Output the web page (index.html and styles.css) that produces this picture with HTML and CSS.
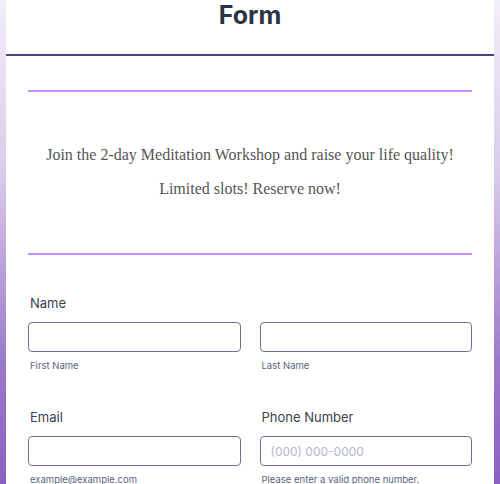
FILE: index.html
```html
<!DOCTYPE html>
<html>
<head>
<meta charset="utf-8">
<link rel="stylesheet" href="styles.css">
</head>
<body>
<div class="card">
  <div class="header"><h1 class="title">Form</h1></div>
  <div class="content">
    <hr class="divider">
    <div class="intro">
      <p>Join the 2-day Meditation Workshop and raise your life quality!</p>
      <p>Limited slots! Reserve now!</p>
    </div>
    <hr class="divider">
    <div class="field">
      <div class="label">Name</div>
      <div class="row">
        <div class="col"><div class="input"></div><div class="sub">First Name</div></div>
        <div class="col"><div class="input"></div><div class="sub">Last Name</div></div>
      </div>
    </div>
    <div class="row two">
      <div class="col">
        <div class="label">Email</div>
        <div class="input"></div>
        <div class="sub">example@example.com</div>
      </div>
      <div class="col">
        <div class="label">Phone Number</div>
        <div class="input"><span class="ph">(000) 000-0000</span></div>
        <div class="sub">Please enter a valid phone number.</div>
      </div>
    </div>
  </div>
</div>
</body>
</html>
```
FILE: styles.css
```css
html, body {
  margin: 0;
  height: 100%;
}
body {
  background: linear-gradient(to bottom, #f2eef8 0%, #d9cdeb 35%, #9c78cb 75%, #8a60c2 100%);
  font-family: Inter, "Noto Sans", sans-serif;
  overflow: hidden;
}
.card {
  margin: 0 6px;
  background: #fff;
  min-height: 100%;
}
.header {
  height: 54px;
  border-bottom: 2px solid #4a4580;
}
.title {
  margin: 0;
  text-align: center;
  font-size: 25px;
  line-height: 30px;
  font-weight: 700;
  color: #2c3345;
}
.content {
  padding: 34px 22px 0;
}
.divider {
  margin: 0;
  border: 0;
  height: 2px;
  background: #c78cf8;
}
.intro {
  padding: 53px 0 54px;
  text-align: center;
  font-family: "Liberation Serif", serif;
  font-size: 16px;
  color: #555;
  white-space: nowrap;
}
.intro p {
  margin: 0 0 14px;
  line-height: 20px;
}
.intro p:last-child {
  margin-bottom: 0;
}
.field {
  padding-top: 39px;
}
.label {
  font-size: 13px;
  line-height: 18px;
  color: #3a3f4b;
  padding-left: 2px;
  margin-bottom: 10px;
}
.row {
  display: grid;
  grid-template-columns: 1fr 1fr;
  column-gap: 19px;
}
.row.two {
  margin-top: 35px;
}
.input {
  height: 28px;
  border: 1.5px solid #6c739b;
  border-radius: 4px;
  display: flex;
  align-items: center;
  padding-left: 10px;
}
.ph {
  font-size: 12px;
  color: #b3b8ca;
}
.sub {
  font-size: 9.5px;
  line-height: 14px;
  margin-top: 7px;
  padding-left: 2px;
  color: #57647e;
}
```
